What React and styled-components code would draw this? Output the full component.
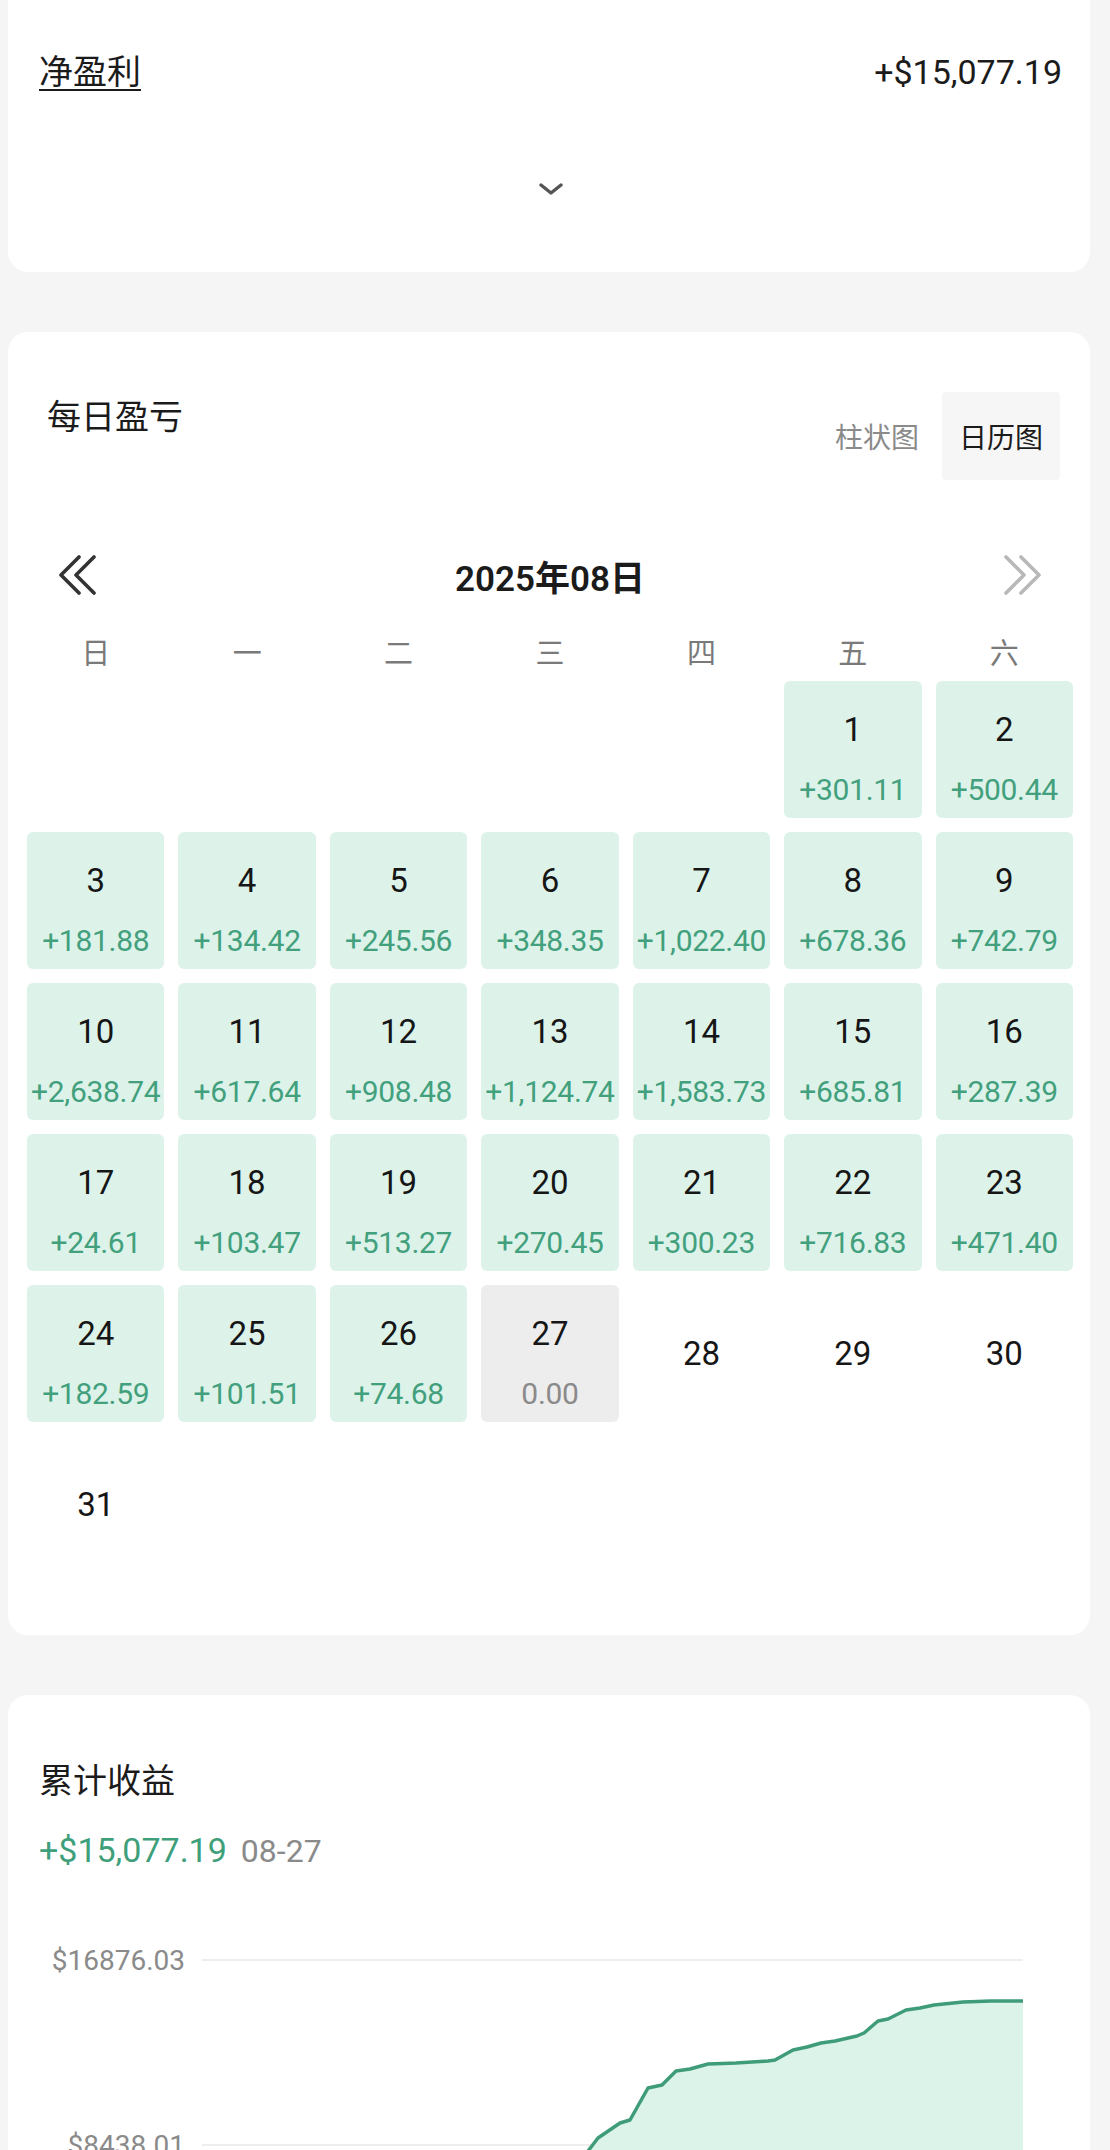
import React from "react";
import styled, { createGlobalStyle } from "styled-components";

const GlobalStyle = createGlobalStyle`
  body {
    margin: 0;
    background: #f5f5f5;
    font-family: Roboto, "Noto Sans CJK SC", sans-serif;
    color: #1b1b1b;
  }
`;

const WEEKDAYS = ["日", "一", "二", "三", "四", "五", "六"];

// 2025-08: the 1st is a Friday, so 5 blanks in front
const DAILY = {
  1: "+301.11", 2: "+500.44", 3: "+181.88", 4: "+134.42", 5: "+245.56",
  6: "+348.35", 7: "+1,022.40", 8: "+678.36", 9: "+742.79", 10: "+2,638.74",
  11: "+617.64", 12: "+908.48", 13: "+1,124.74", 14: "+1,583.73", 15: "+685.81",
  16: "+287.39", 17: "+24.61", 18: "+103.47", 19: "+513.27", 20: "+270.45",
  21: "+300.23", 22: "+716.83", 23: "+471.40", 24: "+182.59", 25: "+101.51",
  26: "+74.68", 27: "0.00",
};

const CURVE = [
  [566, 262], [580, 225], [590, 212], [612, 197], [622, 194], [640, 162],
  [654, 159], [668, 145], [682, 143], [700, 138], [728, 137], [760, 135],
  [767, 134], [785, 124], [799, 121], [813, 117], [827, 115], [849, 110],
  [856, 107], [870, 95], [880, 93], [898, 84], [912, 82], [926, 79],
  [955, 76], [983, 75], [1015, 75],
];

const Page = styled.div`
  height: 2150px;
  overflow: hidden;
  padding: 0 20px 0 8px;
  display: flex;
  flex-direction: column;
  gap: 60px;
`;

const Card = styled.section`
  background: #fff;
  border-radius: ${(p) => (p.$top ? "0 0 20px 20px" : "20px")};
  flex-shrink: 0;
`;

const SummaryCard = styled(Card)`
  height: 272px;
  box-sizing: border-box;
  padding: 50px 28px 0 31px;
  display: flex;
  flex-direction: column;
  align-items: center;
`;

const SummaryRow = styled.div`
  align-self: stretch;
  display: flex;
  justify-content: space-between;
  font-size: 34px;
  line-height: 44px;
`;

const Underlined = styled.span`
  text-decoration: underline;
  text-decoration-thickness: 2px;
  text-underline-offset: 5px;
`;

const Expand = styled.svg`
  margin-top: 89px;
`;

const CalendarCard = styled(Card)`
  height: 1303px;
  box-sizing: border-box;
  padding: 60px 17px 0 19px;
`;

const Header = styled.div`
  display: flex;
  justify-content: space-between;
  align-items: flex-start;
  padding: 0 13px 0 20px;
`;

const Title = styled.h2`
  margin: 0;
  font-size: 34px;
  font-weight: 400;
  line-height: 50px;
`;

const Toggle = styled.div`
  display: flex;
  gap: 6px;
`;

const ToggleItem = styled.div`
  height: 88px;
  padding: 0 17px;
  display: flex;
  align-items: center;
  font-size: 28px;
  color: ${(p) => (p.$active ? "#1b1b1b" : "#8a8a8a")};
  background: ${(p) => (p.$active ? "#f6f6f6" : "transparent")};
  border-radius: 4px;
`;

const MonthNav = styled.div`
  margin-top: 70px;
  height: 50px;
  padding: 0 30px;
  display: flex;
  justify-content: space-between;
  align-items: center;
`;

const Month = styled.div`
  font-size: 35px;
  font-weight: 600;
`;

const Grid = styled.div`
  display: grid;
  grid-template-columns: repeat(7, 1fr);
  column-gap: 14px;
  row-gap: ${(p) => p.$rowGap || 0}px;
  margin-top: ${(p) => p.$mt || 0}px;
`;

const Weekday = styled.div`
  text-align: center;
  font-size: 29px;
  line-height: 40px;
  color: #7a7a7a;
`;

const Cell = styled.div`
  height: 137px;
  box-sizing: border-box;
  border-radius: 6px;
  display: flex;
  flex-direction: column;
  align-items: center;
  justify-content: ${(p) => (p.$plain ? "center" : "flex-start")};
  padding-top: ${(p) => (p.$plain ? 0 : 29)}px;
  background: ${(p) =>
    p.$tone === "up" ? "#ddf3ea" : p.$tone === "flat" ? "#eeeded" : "transparent"};
`;

const DayNum = styled.div`
  font-size: 33px;
  line-height: 40px;
  color: #161616;
`;

const DayValue = styled.div`
  margin-top: 22px;
  font-size: 30px;
  line-height: 36px;
  letter-spacing: -0.3px;
  color: ${(p) => (p.$flat ? "#8a8a8a" : "#42a07d")};
  white-space: nowrap;
`;

const ProfitCard = styled(Card)`
  height: 700px;
  box-sizing: border-box;
  padding: 61px 0 0 0;
`;

const ProfitHead = styled.div`
  padding-left: 31px;
`;

const AmountRow = styled.div`
  margin-top: 19px;
  display: flex;
  align-items: baseline;
  gap: 14px;
  line-height: 50px;
`;

const Amount = styled.span`
  font-size: 34px;
  color: #3e9f7a;
`;

const AmountDate = styled.span`
  font-size: 32px;
  color: #8a8a8a;
`;

const Chart = styled.svg`
  display: block;
  margin-top: 50px;
`;

function DoubleChevron({ dir, color }) {
  const pts =
    dir === "left"
      ? ["22,2 4,20 22,38", "37,2 19,20 37,38"]
      : ["3,2 21,20 3,38", "18,2 36,20 18,38"];
  return (
    <svg width="40" height="40" viewBox="0 0 40 40">
      {pts.map((p) => (
        <polyline key={p} points={p} fill="none" stroke={color} strokeWidth="3.6" strokeLinecap="round" strokeLinejoin="round" />
      ))}
    </svg>
  );
}

function DayCell({ day }) {
  if (!day) return <Cell $plain />;
  const value = DAILY[day];
  if (!value) {
    return (
      <Cell $plain>
        <DayNum>{day}</DayNum>
      </Cell>
    );
  }
  const flat = value === "0.00";
  return (
    <Cell $tone={flat ? "flat" : "up"}>
      <DayNum>{day}</DayNum>
      <DayValue $flat={flat}>{value}</DayValue>
    </Cell>
  );
}

function ProfitChart() {
  const line = CURVE.map(([x, y]) => `${x},${y}`).join(" ");
  const first = CURVE[0];
  const last = CURVE[CURVE.length - 1];
  const area = `${line} ${last[0]},500 ${first[0]},500`;
  return (
    <Chart width="1082" height="420" viewBox="0 0 1082 420">
      <line x1="194" y1="34" x2="1015" y2="34" stroke="#eeeeee" strokeWidth="2" />
      <line x1="194" y1="219" x2="1015" y2="219" stroke="#eeeeee" strokeWidth="2" />
      <polygon points={area} fill="#dcf3e9" />
      <polyline points={line} fill="none" stroke="#3f9c78" strokeWidth="3.5" strokeLinejoin="round" />
      <text x="177" y="44" textAnchor="end" fontSize="28" fill="#8a8a8a" fontFamily="Roboto, sans-serif">$16876.03</text>
      <text x="177" y="229" textAnchor="end" fontSize="28" fill="#8a8a8a" fontFamily="Roboto, sans-serif">$8438.01</text>
    </Chart>
  );
}

export default function App() {
  const days = [...Array(5).fill(null), ...Array.from({ length: 31 }, (_, i) => i + 1)];
  while (days.length < 42) days.push(null);

  return (
    <>
      <GlobalStyle />
      <Page>
        <SummaryCard $top>
          <SummaryRow>
            <Underlined>净盈利</Underlined>
            <span>+$15,077.19</span>
          </SummaryRow>
          <Expand width="24" height="12" viewBox="0 0 24 12">
            <polyline points="2,2 12,10 22,2" fill="none" stroke="#555" strokeWidth="3.4" strokeLinecap="round" strokeLinejoin="round" />
          </Expand>
        </SummaryCard>

        <CalendarCard>
          <Header>
            <Title>每日盈亏</Title>
            <Toggle>
              <ToggleItem>柱状图</ToggleItem>
              <ToggleItem $active>日历图</ToggleItem>
            </Toggle>
          </Header>
          <MonthNav>
            <DoubleChevron dir="left" color="#333" />
            <Month>2025年08日</Month>
            <DoubleChevron dir="right" color="#b8b8b8" />
          </MonthNav>
          <Grid $mt={34}>
            {WEEKDAYS.map((w) => (
              <Weekday key={w}>{w}</Weekday>
            ))}
          </Grid>
          <Grid $mt={7} $rowGap={14}>
            {days.map((d, i) => (
              <DayCell key={i} day={d} />
            ))}
          </Grid>
        </CalendarCard>

        <ProfitCard>
          <ProfitHead>
            <Title>累计收益</Title>
            <AmountRow>
              <Amount>+$15,077.19</Amount>
              <AmountDate>08-27</AmountDate>
            </AmountRow>
          </ProfitHead>
          <ProfitChart />
        </ProfitCard>
      </Page>
    </>
  );
}
